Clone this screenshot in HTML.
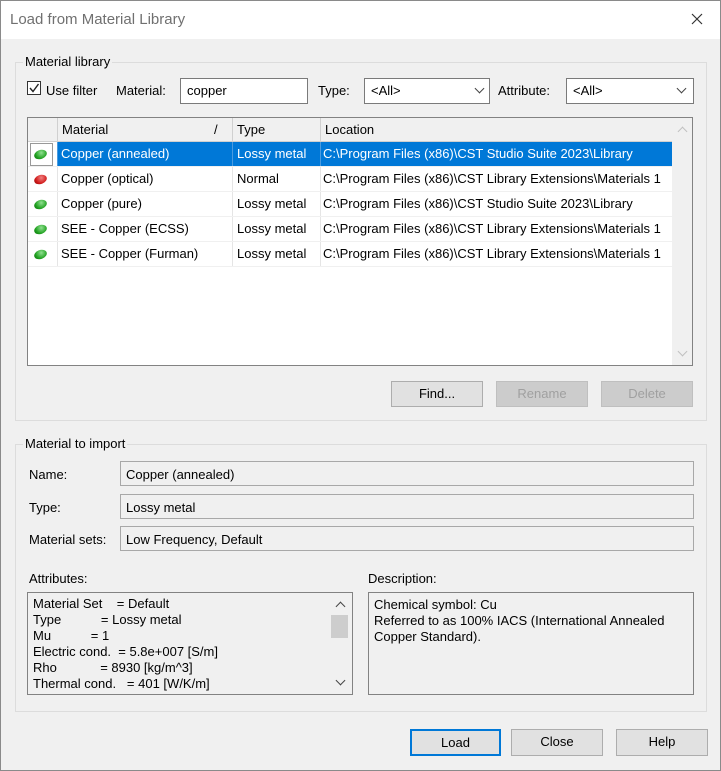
<!DOCTYPE html>
<html><head><meta charset="utf-8"><style>
*{box-sizing:border-box;margin:0;padding:0}
body{width:721px;height:771px;background:#fff;font-family:"Liberation Sans",sans-serif;font-size:13px;color:#000;position:relative;overflow:hidden}
.win{position:absolute;left:0;top:0;width:721px;height:771px;background:#f0f0f0}
.frame{position:absolute;left:0;top:0;width:721px;height:771px;border:1px solid #8a8a8a;pointer-events:none}
.a{position:absolute;white-space:nowrap}
.title{position:absolute;left:0;top:0;width:721px;height:39px;background:#fff}
.grp{position:absolute;border:1px solid #dcdcdc}
.lbl{position:absolute;background:#f0f0f0;padding:0 2px}
.inp{position:absolute;background:#fff;border:1px solid #7a7a7a;padding:4px 6px}
.ro{position:absolute;background:#f0f0f0;border:1px solid #a8a8a8;padding:5px 5px}
.btn{position:absolute;background:#e1e1e1;border:1px solid #adadad;text-align:center;line-height:23px}
.dis{color:#a0a0a0;background:#cccccc;border-color:#bfbfbf}
.row{position:absolute;left:0;width:644px;height:25px;border-bottom:1px solid #f0f0f0;background:#fff}
.row div{position:absolute;top:0;line-height:24px;white-space:nowrap;overflow:hidden}
.c1{left:29px;width:175px;padding-left:3px;border-left:1px solid #e5e5e5}
.c2{left:204px;width:88px;padding-left:4px;border-left:1px solid #e5e5e5}
.c3{left:292px;width:352px;padding-left:2px;border-left:1px solid #e5e5e5}
.sel{background:#0078d7;color:#fff}
.sel div{border-color:#4a9be0}
.dot{position:absolute;left:6px;top:8px;width:13px;height:9px;border-radius:50%;transform:rotate(-20deg)}
.g{background:radial-gradient(circle at 60% 35%,#8fe08f,#1fa01f 60%,#0a6a0a)}
.r{background:radial-gradient(circle at 60% 35%,#f08080,#d01818 60%,#801010)}
.chev{position:absolute;width:7px;height:7px;border-right:1.2px solid #444;border-bottom:1.2px solid #444;transform:rotate(45deg)}
</style></head><body><div class="win">
<div class="title"></div>
<div class="a" style="left:10px;top:11px;font-size:15px;color:#707070">Load from Material Library</div>
<svg class="a" style="left:691px;top:13px" width="12" height="12"><path d="M1 1L11 11M11 1L1 11" stroke="#333" stroke-width="1.2"/></svg>

<div class="grp" style="left:15px;top:62px;width:692px;height:359px"></div>
<div class="lbl" style="left:23px;top:54px">Material library</div>
<div class="a" style="left:27px;top:81px;width:14px;height:14px;border:1px solid #333;background:#fff"></div>
<svg class="a" style="left:28px;top:82px" width="12" height="12"><path d="M2 6L5 9.5L10.5 2" stroke="#222" stroke-width="1.4" fill="none"/></svg>
<div class="a" style="left:46px;top:83px">Use filter</div>
<div class="a" style="left:116px;top:83px">Material:</div>
<div class="inp" style="left:180px;top:78px;width:128px;height:26px">copper</div>
<div class="a" style="left:318px;top:83px">Type:</div>
<div class="inp" style="left:364px;top:78px;width:126px;height:26px">&lt;All&gt;</div><div class="chev" style="left:476px;top:85px"></div>
<div class="a" style="left:498px;top:83px">Attribute:</div>
<div class="inp" style="left:566px;top:78px;width:128px;height:26px">&lt;All&gt;</div><div class="chev" style="left:678px;top:85px"></div>

<div class="a" style="left:27px;top:117px;width:666px;height:249px;background:#fff;border:1px solid #828282">
 <div class="a" style="left:0;top:0;width:644px;height:24px;background:#f0f0f0;border-bottom:1px solid #d0d0d0"></div>
 <div class="a" style="left:29px;top:0;height:24px;border-left:1px solid #d0d0d0;padding-left:4px;line-height:23px;width:175px">Material<span style="position:absolute;left:156px">/</span></div>
 <div class="a" style="left:204px;top:0;height:24px;border-left:1px solid #d0d0d0;padding-left:4px;line-height:23px">Type</div>
 <div class="a" style="left:292px;top:0;height:24px;border-left:1px solid #d0d0d0;padding-left:4px;line-height:23px">Location</div>
 <div class="a" style="left:644px;top:0;width:20px;height:247px;background:#f0f0f0"></div>
 <div class="chev" style="left:651px;top:10px;transform:rotate(-135deg);border-color:#c0c0c0"></div>
 <div class="chev" style="left:651px;top:230px;border-color:#c0c0c0"></div>
 <div class="row sel" style="top:24px;left:29px;width:615px"></div>
 <div class="a" style="left:2px;top:25px;width:23px;height:23px;background:#fff;border:1px solid #999"></div><div class="dot g" style="left:6px;top:32px"></div>
 <div class="row sel" style="top:24px;background:transparent"><div class="c1">Copper (annealed)</div><div class="c2">Lossy metal</div><div class="c3">C:\Program Files (x86)\CST Studio Suite 2023\Library</div></div>
 <div class="row" style="top:49px"><span class="dot r"></span><div class="c1">Copper (optical)</div><div class="c2">Normal</div><div class="c3">C:\Program Files (x86)\CST Library Extensions\Materials 1</div></div>
 <div class="row" style="top:74px"><span class="dot g"></span><div class="c1">Copper (pure)</div><div class="c2">Lossy metal</div><div class="c3">C:\Program Files (x86)\CST Studio Suite 2023\Library</div></div>
 <div class="row" style="top:99px"><span class="dot g"></span><div class="c1">SEE - Copper (ECSS)</div><div class="c2">Lossy metal</div><div class="c3">C:\Program Files (x86)\CST Library Extensions\Materials 1</div></div>
 <div class="row" style="top:124px"><span class="dot g"></span><div class="c1">SEE - Copper (Furman)</div><div class="c2">Lossy metal</div><div class="c3">C:\Program Files (x86)\CST Library Extensions\Materials 1</div></div>
</div>

<div class="btn" style="left:391px;top:381px;width:92px;height:26px">Find...</div>
<div class="btn dis" style="left:496px;top:381px;width:92px;height:26px">Rename</div>
<div class="btn dis" style="left:601px;top:381px;width:92px;height:26px">Delete</div>

<div class="grp" style="left:15px;top:444px;width:692px;height:268px"></div>
<div class="lbl" style="left:23px;top:436px">Material to import</div>
<div class="a" style="left:29px;top:467px">Name:</div>
<div class="ro" style="left:120px;top:461px;width:574px;height:25px">Copper (annealed)</div>
<div class="a" style="left:29px;top:500px">Type:</div>
<div class="ro" style="left:120px;top:494px;width:574px;height:25px">Lossy metal</div>
<div class="a" style="left:29px;top:532px">Material sets:</div>
<div class="ro" style="left:120px;top:526px;width:574px;height:25px">Low Frequency, Default</div>
<div class="a" style="left:29px;top:571px">Attributes:</div>
<div class="a" style="left:27px;top:592px;width:326px;height:103px;background:#f0f0f0;border:1px solid #828282;overflow:hidden">
 <div class="a" style="left:5px;top:3px;line-height:16px;font-size:13px">Material Set&nbsp;&nbsp;&nbsp;&nbsp;= Default<br>Type&nbsp;&nbsp;&nbsp;&nbsp;&nbsp;&nbsp;&nbsp;&nbsp;&nbsp;&nbsp;&nbsp;= Lossy metal<br>Mu&nbsp;&nbsp;&nbsp;&nbsp;&nbsp;&nbsp;&nbsp;&nbsp;&nbsp;&nbsp;&nbsp;= 1<br>Electric cond.&nbsp;&nbsp;= 5.8e+007 [S/m]<br>Rho&nbsp;&nbsp;&nbsp;&nbsp;&nbsp;&nbsp;&nbsp;&nbsp;&nbsp;&nbsp;&nbsp;&nbsp;= 8930 [kg/m^3]<br>Thermal cond.&nbsp;&nbsp;&nbsp;= 401 [W/K/m]</div>
 <div class="a" style="left:303px;top:22px;width:17px;height:23px;background:#cdcdcd"></div>
 <div class="chev" style="left:309px;top:10px;transform:rotate(-135deg)"></div>
 <div class="chev" style="left:309px;top:84px"></div>
</div>
<div class="a" style="left:368px;top:571px">Description:</div>
<div class="a" style="left:368px;top:592px;width:326px;height:103px;background:#f0f0f0;border:1px solid #828282;padding:4px 5px;line-height:16px">Chemical symbol: Cu<br>Referred to as 100% IACS (International Annealed<br>Copper Standard).</div>

<div class="btn" style="left:410px;top:729px;width:91px;height:27px;border:2px solid #0078d7">Load</div>
<div class="btn" style="left:511px;top:729px;width:92px;height:27px">Close</div>
<div class="btn" style="left:616px;top:729px;width:92px;height:27px">Help</div>
</div><div class="frame"></div></body></html>
